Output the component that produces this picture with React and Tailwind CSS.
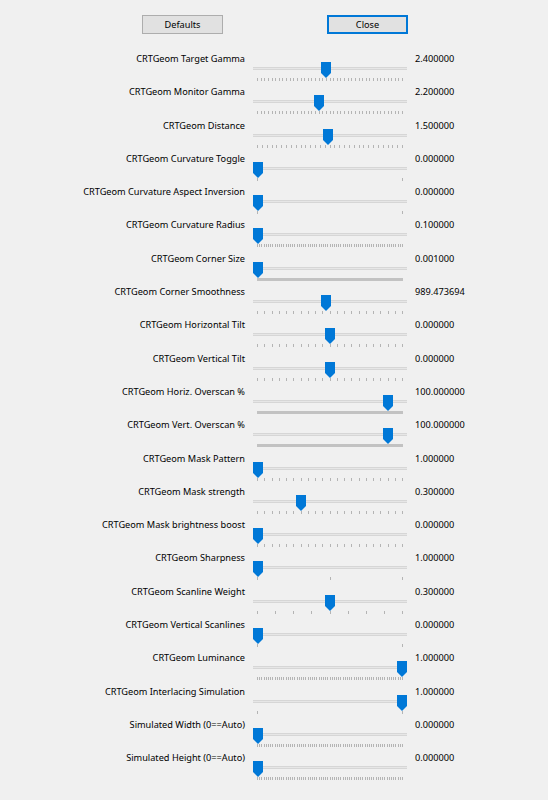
const PARAMS = [
  { label: "CRTGeom Target Gamma", value: "2.400000", pos: 0.47, ticks: 40 },
  { label: "CRTGeom Monitor Gamma", value: "2.200000", pos: 0.425, ticks: 40 },
  { label: "CRTGeom Distance", value: "1.500000", pos: 0.487, ticks: 30 },
  { label: "CRTGeom Curvature Toggle", value: "0.000000", pos: 0, ticks: 1 },
  { label: "CRTGeom Curvature Aspect Inversion", value: "0.000000", pos: 0, ticks: 1 },
  { label: "CRTGeom Curvature Radius", value: "0.100000", pos: 0, ticks: 66 },
  { label: "CRTGeom Corner Size", value: "0.001000", pos: 0, ticks: "solid" },
  { label: "CRTGeom Corner Smoothness", value: "989.473694", pos: 0.475, ticks: 20 },
  { label: "CRTGeom Horizontal Tilt", value: "0.000000", pos: 0.5, ticks: 20 },
  { label: "CRTGeom Vertical Tilt", value: "0.000000", pos: 0.5, ticks: 20 },
  { label: "CRTGeom Horiz. Overscan %", value: "100.000000", pos: 0.9, ticks: "solid" },
  { label: "CRTGeom Vert. Overscan %", value: "100.000000", pos: 0.9, ticks: "solid" },
  { label: "CRTGeom Mask Pattern", value: "1.000000", pos: 0, ticks: 20 },
  { label: "CRTGeom Mask strength", value: "0.300000", pos: 0.3, ticks: 20 },
  { label: "CRTGeom Mask brightness boost", value: "0.000000", pos: 0, ticks: 20 },
  { label: "CRTGeom Sharpness", value: "1.000000", pos: 0, ticks: 2 },
  { label: "CRTGeom Scanline Weight", value: "0.300000", pos: 0.5, ticks: 8 },
  { label: "CRTGeom Vertical Scanlines", value: "0.000000", pos: 0, ticks: 1 },
  { label: "CRTGeom Luminance", value: "1.000000", pos: 1, ticks: 66 },
  { label: "CRTGeom Interlacing Simulation", value: "1.000000", pos: 1, ticks: 1 },
  { label: "Simulated Width (0==Auto)", value: "0.000000", pos: 0, ticks: 66 },
  { label: "Simulated Height (0==Auto)", value: "0.000000", pos: 0, ticks: 66 },
];

const TICK_SPAN = 145;

// tick strip under the channel; "solid" is what a very fine step collapses to
const Ticks = ({ ticks }) => {
  if (ticks === "solid") {
    return <div className="absolute left-[4px] top-[27px] w-[146px] h-[3px] bg-[#c2c2c2]" />;
  }
  const xs = [];
  for (let i = 0; i <= ticks; i++) xs.push(Math.round((i * TICK_SPAN) / ticks) + 0.5);
  return (
    <svg className="absolute left-[4px] top-[27px]" width="147" height="3" shapeRendering="crispEdges">
      {xs.map((x, i) => (
        <line key={i} x1={x} y1="0" x2={x} y2="3" stroke="#b4b4b4" strokeWidth="1" />
      ))}
    </svg>
  );
};

const Thumb = ({ pos }) => (
  <svg
    className="absolute top-[11px]"
    style={{ left: Math.round(pos * 144) }}
    width="10"
    height="16"
    viewBox="0 0 10 16"
  >
    <path d="M0 0H10V11L5 16L0 11Z" fill="#0078d7" />
  </svg>
);

const TrackBar = ({ pos, ticks }) => (
  <div className="relative w-[154px] h-full">
    <div className="absolute left-0 right-0 top-[16px] h-[3px] bg-[#e6e6e6] border-y border-[#d6d6d6]" />
    <Ticks ticks={ticks} />
    <Thumb pos={pos} />
  </div>
);

const Button = ({ children, focused }) => (
  <button
    className={
      focused
        ? "w-[81px] h-[19px] bg-[#e1e1e1] border-2 border-[#0078d7] text-black leading-none"
        : "w-[81px] h-[19px] bg-[#e1e1e1] border border-[#adadad] text-black leading-none"
    }
  >
    {children}
  </button>
);

export default function App() {
  return (
    <div
      className="w-[548px] h-[800px] bg-[#f0f0f0] text-black text-[9.2px] overflow-hidden"
      style={{ fontFamily: "'Noto Sans', 'Open Sans', sans-serif" }}
    >
      <div className="flex pt-[15px] pl-[142px] gap-[104px]">
        <Button>Defaults</Button>
        <Button focused>Close</Button>
      </div>

      <div className="mt-[17px] flex flex-col">
        {PARAMS.map((p) => (
          <div key={p.label} className="flex h-[33.3px]">
            <div className="w-[245px] text-right leading-[15px]">{p.label}</div>
            <div className="ml-[8px]">
              <TrackBar pos={p.pos} ticks={p.ticks} />
            </div>
            <div className="ml-[8px] leading-[15px]">{p.value}</div>
          </div>
        ))}
      </div>
    </div>
  );
}
